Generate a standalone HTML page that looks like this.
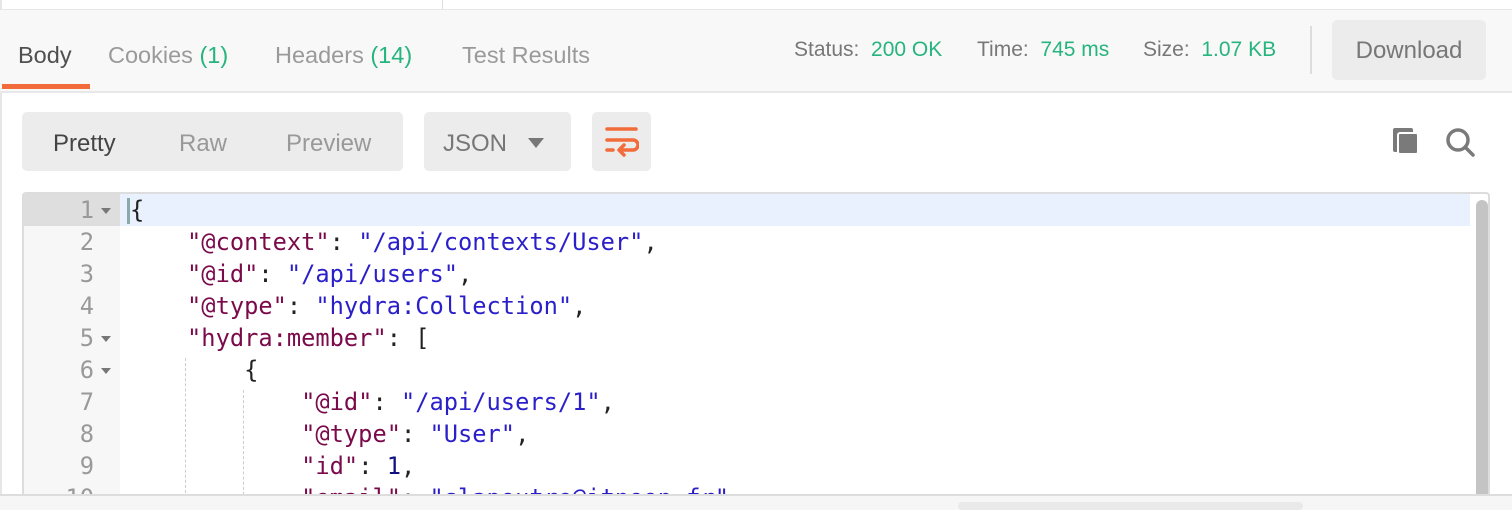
<!DOCTYPE html>
<html><head><style>
body{margin:0;width:1512px;height:508px;overflow:hidden;background:#fff;font-family:"Liberation Sans",sans-serif;position:relative}
.a{position:absolute}
.hdr{left:0;top:9px;width:1512px;height:81px;background:#f8f8f8;border-top:1px solid #e6e6e6;border-bottom:2px solid #e8e8e8}
.tab{top:42px;font-size:23.5px;color:#9a9a9a}
.g{color:#26b47f}
.st{top:38px;font-size:21px;color:#777}
.btn{background:#ececec;border-radius:5px}
.code{font-family:"DejaVu Sans Mono","Liberation Mono",monospace;font-size:23.7px;}
.ln{position:absolute;left:24px;width:70px;text-align:right;color:#999}
.ar{position:absolute;left:101px;width:0;height:0;border-left:5px solid transparent;border-right:5px solid transparent;border-top:6px solid #777}
.k{color:#7a0a4a}.s{color:#2a1fc8}.n{color:#101080}.p{color:#222}
</style></head><body>
<div class="a" style="left:0;top:0;width:2px;height:508px;background:#e6e6e6"></div>
<div class="a" style="left:442px;top:0;width:1px;height:9px;background:#ddd"></div>
<div class="a hdr"></div>
<div class="a" style="left:2px;top:84px;width:88px;height:5px;background:#f26b3a"></div>
<div class="a tab" style="left:18px;color:#505050">Body</div>
<div class="a tab" style="left:108px">Cookies <span class="g">(1)</span></div>
<div class="a tab" style="left:275px">Headers <span class="g">(14)</span></div>
<div class="a tab" style="left:462px">Test Results</div>
<div class="a st" style="left:794px">Status: &nbsp;<span class="g">200 OK</span></div>
<div class="a st" style="left:977px">Time: &nbsp;<span class="g">745 ms</span></div>
<div class="a st" style="left:1143px">Size: &nbsp;<span class="g">1.07 KB</span></div>
<div class="a" style="left:1310px;top:26px;width:2px;height:48px;background:#ddd"></div>
<div class="a btn" style="left:1332px;top:20px;width:154px;height:60px;font-size:24px;color:#777;text-align:center;line-height:62px">Download</div>

<div class="a btn" style="left:22px;top:112px;width:381px;height:59px"></div>
<div class="a" style="left:53px;top:130px;font-size:24px;color:#444">Pretty</div>
<div class="a" style="left:179px;top:130px;font-size:24px;color:#999">Raw</div>
<div class="a" style="left:286px;top:130px;font-size:24px;color:#999">Preview</div>
<div class="a btn" style="left:424px;top:112px;width:147px;height:59px"></div>
<div class="a" style="left:443px;top:130px;font-size:24px;color:#777">JSON</div>
<div class="a" style="left:528px;top:138px;width:0;height:0;border-left:8px solid transparent;border-right:8px solid transparent;border-top:10px solid #777"></div>
<div class="a btn" style="left:592px;top:112px;width:59px;height:59px"></div>
<svg class="a" style="left:605px;top:126px" width="34" height="32"><g stroke="#f26b3a" stroke-width="3.5" fill="none" stroke-linecap="round"><path d="M2 3h29M2 14h26a5 5 0 0 1 0 10H15M2 24h6"/><path d="M19 19l-5 5 5 5" stroke-linejoin="round"/></g></svg>
<svg class="a" style="left:1392px;top:127px" width="32" height="32"><rect x="1" y="1" width="20" height="24" rx="2" fill="#7a7a7a"/><rect x="6" y="6" width="20" height="21" rx="2" fill="#7a7a7a" stroke="#fff" stroke-width="2"/></svg>
<svg class="a" style="left:1445px;top:127px" width="32" height="32"><circle cx="13" cy="13" r="10" stroke="#7a7a7a" stroke-width="3.5" fill="none"/><path d="M20 20l8 8" stroke="#7a7a7a" stroke-width="3.5" stroke-linecap="round"/></svg>

<div class="a" style="left:22px;top:192px;width:1464px;height:310px;border:2px solid #ddd;border-radius:4px;background:#fff"></div>
<div class="a" style="left:24px;top:194px;width:96px;height:301px;background:#f7f7f7"></div>
<div class="a" style="left:24px;top:194px;width:96px;height:32px;background:#dedede"></div>
<div class="a" style="left:120px;top:194px;width:1350px;height:32px;background:#e8f1fd"></div>
<div class="a" style="left:127px;top:198px;width:3px;height:26px;background:#8aa"></div>
<div class="a" style="left:1476px;top:200px;width:12px;height:300px;border-radius:6px;background:#c4c4c4"></div>
<div class="a" style="left:185px;top:358px;border-left:1px dashed #ccc;height:140px"></div>
<div class="a" style="left:243px;top:390px;border-left:1px dashed #ccc;height:110px"></div>
<div class="a code" style="left:0;top:194px;width:1470px;height:301px;overflow:hidden">
<div style="position:relative;line-height:32px">
<div class="ln" style="top:0">1</div><div class="ln" style="top:32px">2</div><div class="ln" style="top:64px">3</div><div class="ln" style="top:96px">4</div><div class="ln" style="top:128px">5</div><div class="ln" style="top:160px">6</div><div class="ln" style="top:192px">7</div><div class="ln" style="top:224px">8</div><div class="ln" style="top:256px">9</div><div class="ln" style="top:288px">10</div>
<div class="ar" style="top:14px"></div><div class="ar" style="top:142px"></div><div class="ar" style="top:174px"></div>
<pre class="p" style="position:absolute;left:130px;top:0;margin:0;font:inherit;line-height:32px">{
    <span class="k">"@context"</span>: <span class="s">"/api/contexts/User"</span>,
    <span class="k">"@id"</span>: <span class="s">"/api/users"</span>,
    <span class="k">"@type"</span>: <span class="s">"hydra:Collection"</span>,
    <span class="k">"hydra:member"</span>: [
        {
            <span class="k">"@id"</span>: <span class="s">"/api/users/1"</span>,
            <span class="k">"@type"</span>: <span class="s">"User"</span>,
            <span class="k">"id"</span>: <span class="n">1</span>,
            <span class="k">"email"</span>: <span class="s">"slapoutre@itnoon.fr"</span>,</pre>
</div></div>
<div class="a" style="left:0;top:494px;width:1512px;height:14px;background:#f6f6f6;border-top:2px solid #ddd"></div>
<div class="a" style="left:958px;top:502px;width:345px;height:8px;background:#e9e9e9;border-radius:4px"></div>
</body></html>
